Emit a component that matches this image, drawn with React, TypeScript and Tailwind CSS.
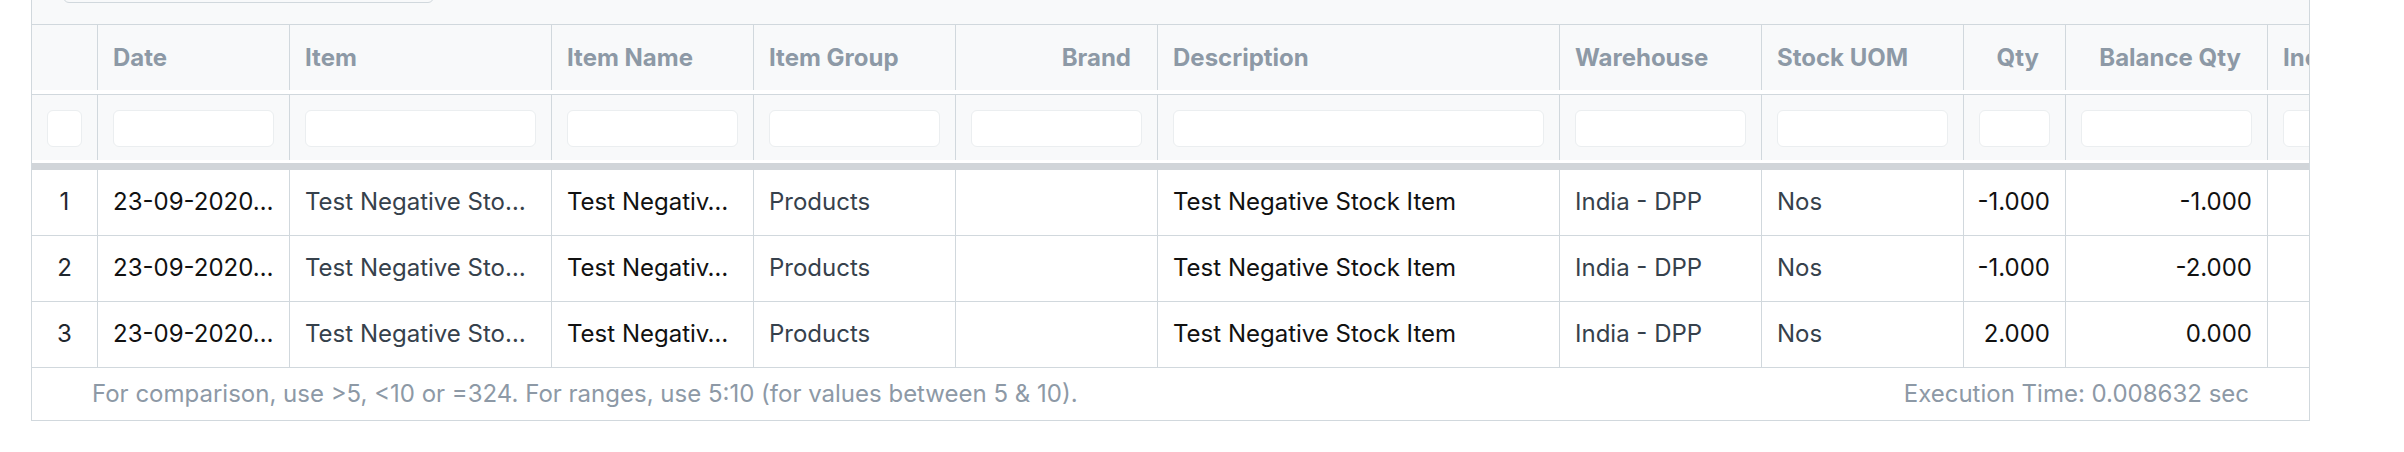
import React from "react";

type Col = {
  label: string;
  width: string;
  align?: "left" | "right";
};

const columns: Col[] = [
  { label: "Date", width: "w-[192px]" },
  { label: "Item", width: "w-[262px]" },
  { label: "Item Name", width: "w-[202px]" },
  { label: "Item Group", width: "w-[202px]" },
  { label: "Brand", width: "w-[202px]", align: "right" },
  { label: "Description", width: "w-[402px]" },
  { label: "Warehouse", width: "w-[202px]" },
  { label: "Stock UOM", width: "w-[202px]" },
  { label: "Qty", width: "w-[102px]", align: "right" },
  { label: "Balance Qty", width: "w-[202px]", align: "right" },
  { label: "Incoming Rate", width: "w-[202px]" },
];

type Cell = { text: string; dark?: boolean };

const rows: Cell[][] = [
  [
    { text: "23-09-2020…", dark: true },
    { text: "Test Negative Sto…" },
    { text: "Test Negativ…", dark: true },
    { text: "Products" },
    { text: "" },
    { text: "Test Negative Stock Item", dark: true },
    { text: "India - DPP" },
    { text: "Nos" },
    { text: "-1.000", dark: true },
    { text: "-1.000", dark: true },
    { text: "" },
  ],
  [
    { text: "23-09-2020…", dark: true },
    { text: "Test Negative Sto…" },
    { text: "Test Negativ…", dark: true },
    { text: "Products" },
    { text: "" },
    { text: "Test Negative Stock Item", dark: true },
    { text: "India - DPP" },
    { text: "Nos" },
    { text: "-1.000", dark: true },
    { text: "-2.000", dark: true },
    { text: "" },
  ],
  [
    { text: "23-09-2020…", dark: true },
    { text: "Test Negative Sto…" },
    { text: "Test Negativ…", dark: true },
    { text: "Products" },
    { text: "" },
    { text: "Test Negative Stock Item", dark: true },
    { text: "India - DPP" },
    { text: "Nos" },
    { text: "2.000", dark: true },
    { text: "0.000", dark: true },
    { text: "" },
  ],
];

function FilterInput() {
  return <div className="h-[37px] w-full rounded-[6px] border border-[#ebeef0] bg-white" />;
}

export default function App() {
  return (
    <div className="min-h-screen bg-white font-['Inter',sans-serif] pl-[31px]">
      <div className="w-[2279px] overflow-hidden border-x border-b border-[#d1d8dd] bg-white">
        {/* toolbar, mostly scrolled out of view */}
        <div className="h-[24px] overflow-hidden bg-[#f8f9fa] pl-[31px]">
          <div className="-mt-[37px] h-[40px] w-[371px] rounded-[6px] border border-[#d1d8dd] bg-[#f8f9fa]" />
        </div>

        {/* header */}
        <div className="border-t border-[#d1d8dd] pb-[4px]">
          <div className="flex">
            <div className="h-[65px] w-[66px] shrink-0 border-r border-[#d1d8dd] bg-[#f8f9fa]" />
            {columns.map((c) => (
              <div
                key={c.label}
                className={`flex h-[65px] shrink-0 items-center overflow-hidden whitespace-nowrap border-r border-[#d1d8dd] bg-[#f8f9fa] text-[24px] font-bold text-[#8d99a6] ${c.width} ${
                  c.align === "right" ? "justify-end pl-[15px] pr-[26px]" : "pl-[15px] pr-[15px]"
                }`}
              >
                {c.label}
              </div>
            ))}
          </div>
        </div>

        {/* filter row */}
        <div className="border-t border-[#d1d8dd] pb-[3px]">
          <div className="flex">
            <div className="h-[65px] w-[66px] shrink-0 border-r border-[#d1d8dd] bg-[#f8f9fa] px-[15px] pt-[15px]">
              <FilterInput />
            </div>
            {columns.map((c) => (
              <div
                key={c.label}
                className={`h-[65px] shrink-0 border-r border-[#d1d8dd] bg-[#f8f9fa] px-[15px] pt-[15px] ${c.width}`}
              >
                <FilterInput />
              </div>
            ))}
          </div>
        </div>
        <div className="h-[7px] bg-[#d1d5d9]" />

        {/* body */}
        {rows.map((r, i) => (
          <div key={i} className="flex border-b border-[#d1d8dd]">
            <div className="flex h-[65px] w-[66px] shrink-0 items-center justify-center border-r border-[#d1d8dd] pb-[2px] text-[24px] text-[#1f272e]">
              {i + 1}
            </div>
            {r.map((cell, j) => (
              <div
                key={j}
                className={`flex h-[65px] shrink-0 items-center overflow-hidden whitespace-nowrap border-r border-[#d1d8dd] px-[15px] pb-[2px] text-[24px] ${
                  columns[j].width
                } ${columns[j].align === "right" ? "justify-end" : ""} ${
                  cell.dark ? "text-[#111111]" : "text-[#36414c]"
                }`}
              >
                {cell.text}
              </div>
            ))}
          </div>
        ))}

        {/* footer */}
        <div className="flex h-[52px] items-center justify-between px-[60px] text-[24px] text-[#8d99a6]">
          <span>For comparison, use &gt;5, &lt;10 or =324. For ranges, use 5:10 (for values between 5 &amp; 10).</span>
          <span>Execution Time: 0.008632 sec</span>
        </div>
      </div>
    </div>
  );
}
